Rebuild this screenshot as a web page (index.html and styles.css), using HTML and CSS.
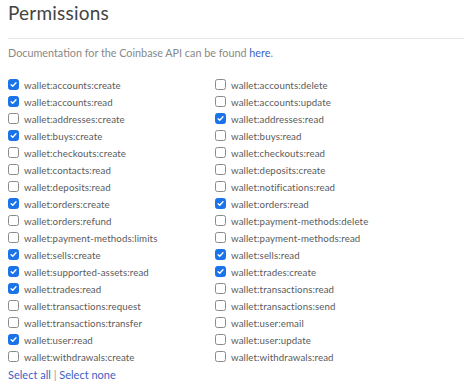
FILE: index.html
```html
<!DOCTYPE html>
<html lang="en">

<head>
    <meta charset="UTF-8">
    <title>Permissions</title>
    <link rel="stylesheet" href="styles.css">
</head>

<body>
    <h2 class="title">Permissions</h2>
    <p class="docText">Documentation for the Coinbase API can be found <a href="#" class="link">here</a>.</p>

    <div class="scopeGrid">
        <label class="scope"><span class="box on"><svg viewBox="0 0 12 12"><path d="M2.8 6.2 L5 8.4 L9.3 3.6" /></svg></span>wallet:accounts:create</label>
        <label class="scope"><span class="box"></span>wallet:accounts:delete</label>
        <label class="scope"><span class="box on"><svg viewBox="0 0 12 12"><path d="M2.8 6.2 L5 8.4 L9.3 3.6" /></svg></span>wallet:accounts:read</label>
        <label class="scope"><span class="box"></span>wallet:accounts:update</label>
        <label class="scope"><span class="box"></span>wallet:addresses:create</label>
        <label class="scope"><span class="box on"><svg viewBox="0 0 12 12"><path d="M2.8 6.2 L5 8.4 L9.3 3.6" /></svg></span>wallet:addresses:read</label>
        <label class="scope"><span class="box on"><svg viewBox="0 0 12 12"><path d="M2.8 6.2 L5 8.4 L9.3 3.6" /></svg></span>wallet:buys:create</label>
        <label class="scope"><span class="box"></span>wallet:buys:read</label>
        <label class="scope"><span class="box"></span>wallet:checkouts:create</label>
        <label class="scope"><span class="box"></span>wallet:checkouts:read</label>
        <label class="scope"><span class="box"></span>wallet:contacts:read</label>
        <label class="scope"><span class="box"></span>wallet:deposits:create</label>
        <label class="scope"><span class="box"></span>wallet:deposits:read</label>
        <label class="scope"><span class="box"></span>wallet:notifications:read</label>
        <label class="scope"><span class="box on"><svg viewBox="0 0 12 12"><path d="M2.8 6.2 L5 8.4 L9.3 3.6" /></svg></span>wallet:orders:create</label>
        <label class="scope"><span class="box on"><svg viewBox="0 0 12 12"><path d="M2.8 6.2 L5 8.4 L9.3 3.6" /></svg></span>wallet:orders:read</label>
        <label class="scope"><span class="box"></span>wallet:orders:refund</label>
        <label class="scope"><span class="box"></span>wallet:payment-methods:delete</label>
        <label class="scope"><span class="box"></span>wallet:payment-methods:limits</label>
        <label class="scope"><span class="box"></span>wallet:payment-methods:read</label>
        <label class="scope"><span class="box on"><svg viewBox="0 0 12 12"><path d="M2.8 6.2 L5 8.4 L9.3 3.6" /></svg></span>wallet:sells:create</label>
        <label class="scope"><span class="box on"><svg viewBox="0 0 12 12"><path d="M2.8 6.2 L5 8.4 L9.3 3.6" /></svg></span>wallet:sells:read</label>
        <label class="scope"><span class="box on"><svg viewBox="0 0 12 12"><path d="M2.8 6.2 L5 8.4 L9.3 3.6" /></svg></span>wallet:supported-assets:read</label>
        <label class="scope"><span class="box on"><svg viewBox="0 0 12 12"><path d="M2.8 6.2 L5 8.4 L9.3 3.6" /></svg></span>wallet:trades:create</label>
        <label class="scope"><span class="box on"><svg viewBox="0 0 12 12"><path d="M2.8 6.2 L5 8.4 L9.3 3.6" /></svg></span>wallet:trades:read</label>
        <label class="scope"><span class="box"></span>wallet:transactions:read</label>
        <label class="scope"><span class="box"></span>wallet:transactions:request</label>
        <label class="scope"><span class="box"></span>wallet:transactions:send</label>
        <label class="scope"><span class="box"></span>wallet:transactions:transfer</label>
        <label class="scope"><span class="box"></span>wallet:user:email</label>
        <label class="scope"><span class="box on"><svg viewBox="0 0 12 12"><path d="M2.8 6.2 L5 8.4 L9.3 3.6" /></svg></span>wallet:user:read</label>
        <label class="scope"><span class="box"></span>wallet:user:update</label>
        <label class="scope"><span class="box"></span>wallet:withdrawals:create</label>
        <label class="scope"><span class="box"></span>wallet:withdrawals:read</label>
    </div>

    <p class="selectLinks"><a href="#" class="link">Select all</a> <span class="sep">|</span> <a href="#" class="link">Select none</a></p>
</body>

</html>
```

FILE: styles.css
```css
* {
    margin: 0;
    padding: 0;
    box-sizing: border-box;
}

body {
    background-color: white;
    color: #555;
    font-family: "Lato", sans-serif;
    padding: 0 8px;
}

.title {
    font-size: 19px;
    font-weight: 400;
    color: #444;
    letter-spacing: 0.2px;
    line-height: 24px;
    padding-top: 1px;
    padding-bottom: 13px;
    border-bottom: 1px solid #e6e6e6;
    margin-right: 2px;
}

.docText {
    font-size: 10.8px;
    color: #888;
    margin-top: 7px;
    margin-bottom: 17px;
}

.link {
    color: #3d5fc4;
    text-decoration: none;
}

.scopeGrid {
    display: grid;
    grid-template-columns: 207px 1fr;
    grid-auto-rows: 17px;
}

.scope {
    display: flex;
    align-items: center;
    gap: 5px;
    font-size: 9.7px;
    letter-spacing: 0.1px;
    color: #5a5a5a;
}

.box {
    width: 11px;
    height: 11px;
    border: 1px solid #8a8a8a;
    border-radius: 2.5px;
    flex-shrink: 0;
}

.box.on {
    background-color: #1a73e8;
    border-color: #1a73e8;
}

.box svg {
    display: block;
    width: 100%;
    height: 100%;
    fill: none;
    stroke: white;
    stroke-width: 1.8;
    stroke-linecap: round;
    stroke-linejoin: round;
}

.selectLinks {
    font-size: 11px;
    margin-top: 3px;
}

.sep {
    color: #999;
}
```
